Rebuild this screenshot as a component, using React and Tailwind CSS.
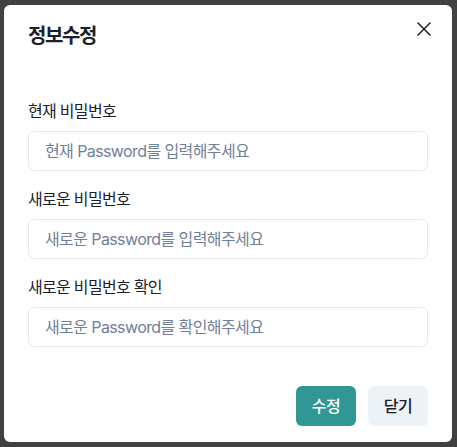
const fields = [
  { label: "현재 비밀번호", placeholder: "현재 Password를 입력해주세요", first: true },
  { label: "새로운 비밀번호", placeholder: "새로운 Password를 입력해주세요" },
  { label: "새로운 비밀번호 확인", placeholder: "새로운 Password를 확인해주세요" },
];

const App = () => {
  return (
    <div
      className="w-[457px] h-[447px] bg-[#414141] pt-[5px] pl-[4px]"
      style={{ fontFamily: "Inter, 'Noto Sans CJK KR', sans-serif" }}
    >
      <div className="relative w-[448px] h-[437px] bg-white rounded-md flex flex-col">
        {/* Header */}
        <div className="px-6 pt-4 pb-4 text-xl leading-[30px] font-semibold tracking-[-1.4px] text-[#1a202c]">
          정보수정
        </div>
        <button className="absolute top-[8px] right-[12px] w-8 h-[32px] flex items-center justify-center text-[#1a202c]">
          <svg width="14" height="14" viewBox="0 0 14 14" fill="none">
            <path d="M1 1L13 13M13 1L1 13" stroke="currentColor" strokeWidth="1.5" strokeLinecap="round" />
          </svg>
        </button>

        {/* Body */}
        <div className="px-6 pt-2 flex-1">
          {fields.map((f) => (
            <div key={f.label} className={f.first ? "mt-6" : "mt-4"}>
              <label className="block mb-2 text-base leading-6 font-normal tracking-[-0.7px] text-[#1a202c]">
                {f.label}
              </label>
              <input
                type="password"
                placeholder={f.placeholder}
                className="w-full h-10 px-4 border border-[#e2e8f0] rounded-md text-base tracking-[-0.6px] outline-none placeholder:text-[#718096]"
              />
            </div>
          ))}
        </div>

        {/* Footer */}
        <div className="px-6 pb-4 flex justify-end gap-3">
          <button className="w-[60px] h-10 rounded-md bg-[#319795] text-white font-medium text-base tracking-[-0.5px]">
            수정
          </button>
          <button className="w-[60px] h-10 rounded-md bg-[#edf2f7] text-[#1a202c] font-medium text-base tracking-[-0.5px]">
            닫기
          </button>
        </div>
      </div>
    </div>
  );
};

export default App;
